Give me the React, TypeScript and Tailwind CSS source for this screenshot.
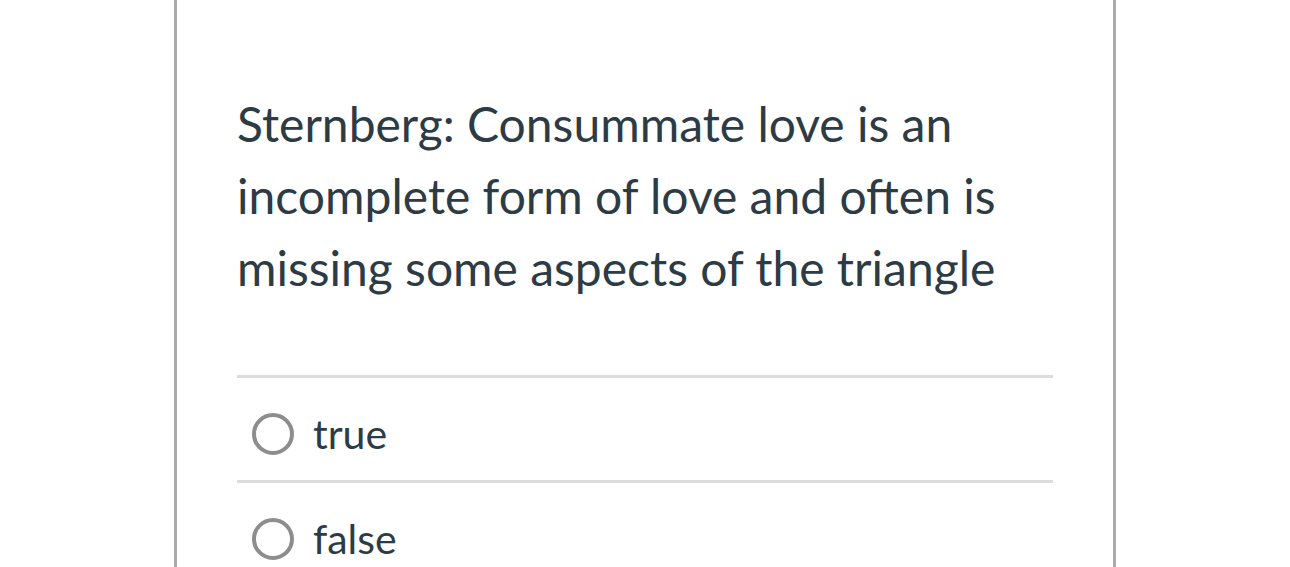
import React from "react";

function Option({ label }: { label: string }) {
  return (
    <div className="border-t-[3px] border-[#dcdcdc] pt-[35px] pb-[25px] flex items-center">
      <span className="ml-[15px] w-[42px] h-[42px] rounded-full border-[4px] border-[#8d8d8d] bg-white shrink-0" />
      <span className="ml-[19px] text-[41px] leading-[42px] text-[#2d3b45]">{label}</span>
    </div>
  );
}

export default function App() {
  return (
    <div className="w-[1290px] h-[567px] overflow-hidden bg-white" style={{ fontFamily: "Lato, 'Noto Sans', sans-serif" }}>
      <div className="ml-[174px] w-[942px] h-[567px] border-l-[3px] border-r-[3px] border-[#ababab] px-[60px] pt-[88px]">
        <p className="text-[48px] leading-[72px] text-[#2d3b45]">
          Sternberg: Consummate love is an incomplete form of love and often is missing some aspects of the triangle
        </p>
        <div className="mt-[71px]">
          <Option label="true" />
          <Option label="false" />
        </div>
      </div>
    </div>
  );
}
